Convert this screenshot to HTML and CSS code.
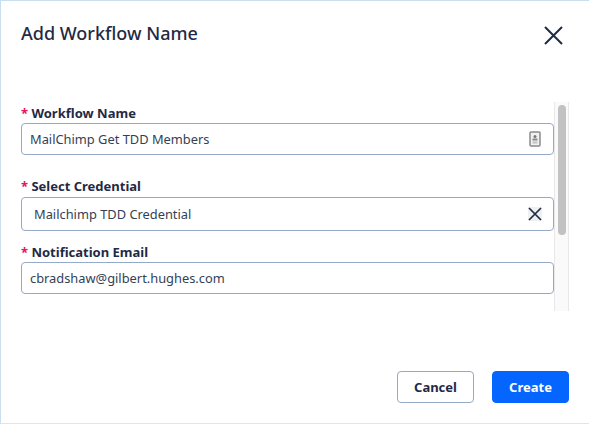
FILE: index.html
```html
<!DOCTYPE html>
<html lang="en">
<head>
    <meta charset="UTF-8">
    <meta name="viewport" content="width=device-width, initial-scale=1.0">
    <title>Add Workflow Name</title>
    <link rel="stylesheet" href="styles.css">
</head>
<body>

<div class="modal">
    <div class="modal-header">
        <h2>Add Workflow Name</h2>
        <button class="close-btn" aria-label="Close">
            <svg width="19" height="19" viewBox="0 0 19 19"><path d="M1 1L18 18M18 1L1 18" stroke="#1f2a44" stroke-width="2" fill="none"/></svg>
        </button>
    </div>

    <div class="modal-body">
        <div class="form">
            <div class="input-group name-group">
                <label><span class="req">*</span> Workflow Name</label>
                <div class="field">
                    <span class="value">MailChimp Get TDD Members</span>
                    <svg class="contact-icon" width="12" height="16" viewBox="0 0 12 16">
                        <rect x="1" y="1" width="10" height="14" rx="1" fill="#f1f1f1" stroke="#8a8a8a" stroke-width="1.5"/>
                        <circle cx="6" cy="5.4" r="1.5" fill="#777"/>
                        <rect x="3.5" y="7.5" width="5" height="2" fill="#8a8a8a"/>
                        <rect x="3.5" y="10.5" width="5" height="2" fill="#c2c2c2"/>
                    </svg>
                </div>
            </div>

            <div class="input-group credential-group">
                <label><span class="req">*</span> Select Credential</label>
                <div class="field field-select">
                    <span class="value">Mailchimp TDD Credential</span>
                    <span class="clear-btn">
                        <svg width="14" height="14" viewBox="0 0 14 14"><path d="M1 1L13 13M13 1L1 13" stroke="#1f2a44" stroke-width="1.7" fill="none"/></svg>
                    </span>
                </div>
            </div>

            <div class="input-group">
                <label><span class="req">*</span> Notification Email</label>
                <div class="field">
                    <span class="value">cbradshaw@gilbert.hughes.com</span>
                </div>
            </div>
        </div>

        <div class="scrollbar">
            <div class="scrollbar-thumb"></div>
        </div>
    </div>

    <div class="modal-footer">
        <button class="btn btn-cancel">Cancel</button>
        <button class="btn btn-create">Create</button>
    </div>
</div>

</body>
</html>
```

FILE: styles.css
```css
* {
    box-sizing: border-box;
}
html, body {
    margin: 0;
    height: 100%;
}
body {
    font-family: "Noto Sans", "Open Sans", Arial, sans-serif;
    background-color: white;
    color: #1f2a44;
}
.modal {
    width: 589px;
    height: 424px;
    display: flex;
    flex-direction: column;
    background-color: white;
    border-top: 1px solid #c9dff0;
    border-left: 1px solid #c9dff0;
    border-bottom: 1px solid #dfe5ec;
}
.modal-header {
    height: 101px;
    padding: 20px 26px 0 20px;
    display: flex;
    justify-content: space-between;
    align-items: flex-start;
}
.modal-header h2 {
    margin: 0;
    font-size: 18px;
    line-height: 24px;
    font-weight: 500;
    color: #1f2a44;
}
.close-btn {
    margin-top: 5px;
    padding: 0;
    width: 19px;
    height: 19px;
    border: none;
    background: none;
}
.modal-body {
    height: 209px;
    padding-left: 20px;
    display: flex;
}
.form {
    width: 533px;
    padding-top: 2px;
}
.input-group label {
    display: block;
    height: 19px;
    font-size: 13px;
    line-height: 18px;
    font-weight: 700;
    color: #1f2a44;
}
.credential-group label {
    height: 20px;
}
.req {
    color: #e6125d;
}
.name-group {
    margin-bottom: 22px;
}
.credential-group {
    margin-bottom: 12px;
}
.field {
    height: 32px;
    padding: 0 8px;
    display: flex;
    align-items: center;
    justify-content: space-between;
    border: 1px solid #94aac6;
    border-radius: 4px;
    font-size: 12.85px;
    color: #333f55;
}
.field-select {
    height: 34px;
    padding: 0 0 0 12px;
}
.contact-icon {
    margin-right: 4px;
}
.clear-btn {
    width: 14px;
    height: 14px;
    margin-right: 11px;
    display: flex;
    background-color: #f0f0f0;
}
.scrollbar {
    width: 15px;
    padding: 3px 2px 0 3px;
    background-color: #fafafa;
    border-left: 1px solid #e8e8e8;
    border-right: 1px solid #e8e8e8;
}
.scrollbar-thumb {
    height: 130px;
    border-radius: 4px;
    background-color: #c2c2c2;
}
.modal-footer {
    padding: 60px 20px 0 0;
    display: flex;
    justify-content: flex-end;
    gap: 18px;
}
.btn {
    width: 77px;
    height: 32px;
    border-radius: 4px;
    font-family: inherit;
    font-size: 13px;
    font-weight: 700;
}
.btn-cancel {
    background-color: white;
    border: 1px solid #94aac6;
    color: #1f2a44;
}
.btn-create {
    background-color: #0566ff;
    border: 1px solid #0566ff;
    color: white;
}
```
